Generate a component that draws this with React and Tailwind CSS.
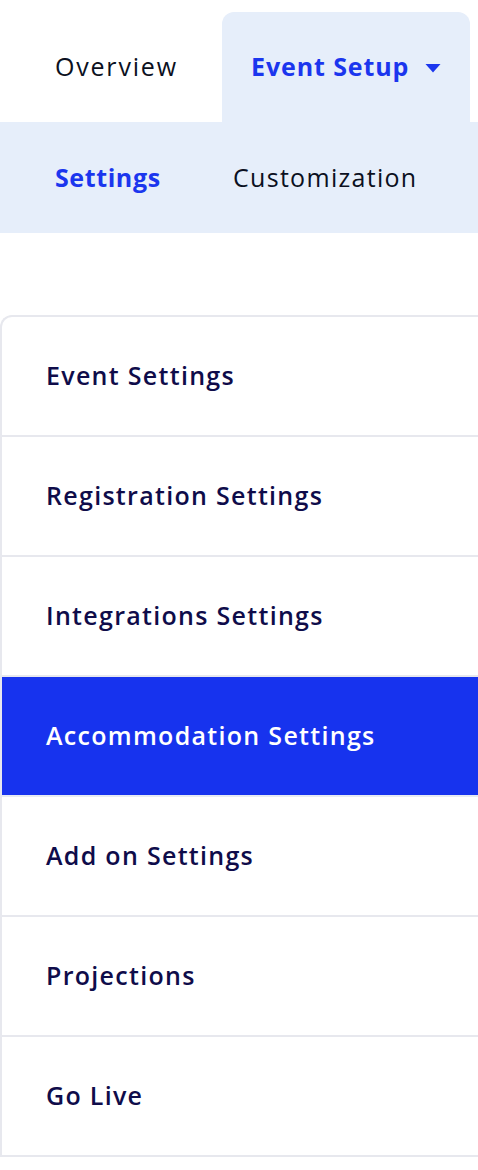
import React from 'react';

const items = [
    'Event Settings',
    'Registration Settings',
    'Integrations Settings',
    'Accommodation Settings',
    'Add on Settings',
    'Projections',
    'Go Live',
];

function App() {
    const active = 'Accommodation Settings';

    return (
        <div className="min-h-[1170px] w-[478px] overflow-hidden bg-white" style={{ fontFamily: '"Open Sans", "Noto Sans", sans-serif' }}>
            {/* top tabs */}
            <div className="flex items-end h-[122px] pt-3">
                <div className="flex items-center h-full pl-[55px] w-[222px] text-[25px] font-medium tracking-[1.8px] text-[#0b1021]">
                    Overview
                </div>
                <div className="flex items-center h-full w-[248px] pl-[29px] rounded-t-xl bg-[#e6eefa] text-[25px] font-bold tracking-[0.9px] text-[#1b36ee]">
                    Event Setup
                    <svg className="ml-[16px] mt-[2px]" width="16" height="10" viewBox="0 0 16 10">
                        <path d="M0.5 1h15L8 9.5z" fill="#1b36ee" />
                    </svg>
                </div>
            </div>

            {/* sub nav */}
            <div className="flex items-center h-[111px] bg-[#e6eefa] text-[25px]">
                <span className="pl-[55px] w-[233px] font-bold tracking-[0.6px] text-[#1b36ee]">Settings</span>
                <span className="font-medium tracking-[1.3px] text-[#0b1021]">Customization</span>
            </div>

            {/* settings list */}
            <div className="mt-[82px] w-[490px] rounded-tl-xl border-l-2 border-t-2 border-[#e7e8ee]">
                {items.map((item) => (
                    <div
                        key={item}
                        className={`flex items-center h-[120px] pl-[44px] border-b-2 text-[25px] font-semibold tracking-[1.3px] ${
                            item === active
                                ? 'bg-[#1733ee] text-white border-[#e7ebf3]'
                                : 'text-[#0f0c4a] border-[#e7e8ee]'
                        }`}
                    >
                        {item}
                    </div>
                ))}
            </div>
        </div>
    );
}

export default App;
